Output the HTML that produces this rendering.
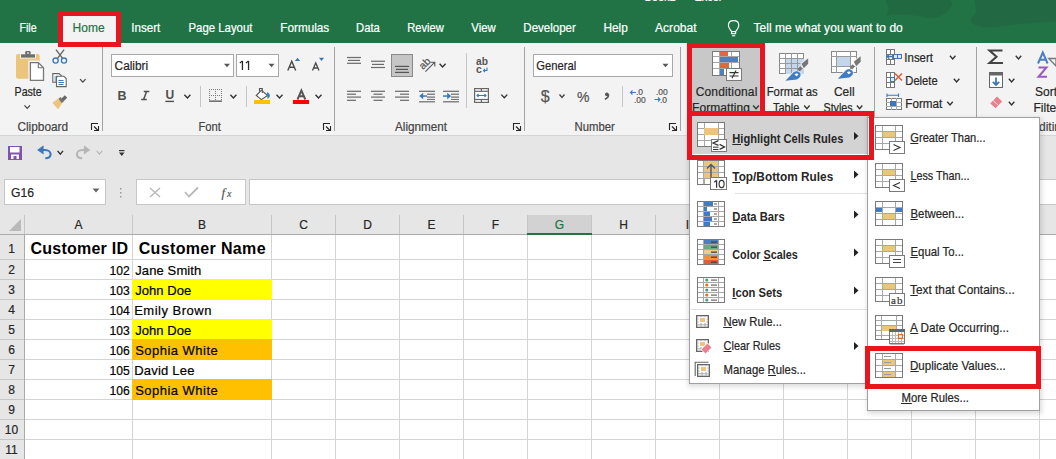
<!DOCTYPE html>
<html><head><meta charset="utf-8"><style>
html,body{margin:0;padding:0;width:1056px;height:459px;overflow:hidden;background:#fff}
svg{display:block;font-family:"Liberation Sans",sans-serif}
</style></head><body>
<svg width="1056" height="459" viewBox="0 0 1056 459">
<rect x="0" y="0" width="1056" height="43" fill="#217346" />
<path d="M885,0 L889,9 L885.5,16 C900,13 915,15 927,18 C940,18 948,14 952,5 L951,0 Z" fill="#216a41" />
<path d="M975,0 L976,10 C977,14 972,17 970.5,19.5 C972,24 978,27.5 988,27.5 C1000,27 1010,25 1020,24 C1035,22.5 1045,22 1056,22 L1056,0 Z" fill="#226842" />
<text x="0" y="0" transform="translate(644.60,1) scale(0.9083,1)" font-size="12" font-weight="400" fill="#ffffff" stroke="#ffffff" stroke-width="0.2" >Book1</text>
<text x="0" y="0" transform="translate(694.60,1) scale(0.9066,1)" font-size="12" font-weight="400" fill="#ffffff" stroke="#ffffff" stroke-width="0.2" >Excel</text>
<text x="0" y="0" transform="translate(19.40,32) scale(0.8951,1)" font-size="12" font-weight="400" fill="#ffffff" stroke="#ffffff" stroke-width="0.2" >File</text>
<text x="0" y="0" transform="translate(131.23,32) scale(0.9671,1)" font-size="12" font-weight="400" fill="#ffffff" stroke="#ffffff" stroke-width="0.2" >Insert</text>
<text x="0" y="0" transform="translate(188.50,32) scale(0.9492,1)" font-size="12" font-weight="400" fill="#ffffff" stroke="#ffffff" stroke-width="0.2" >Page Layout</text>
<text x="0" y="0" transform="translate(280.30,32) scale(0.9798,1)" font-size="12" font-weight="400" fill="#ffffff" stroke="#ffffff" stroke-width="0.2" >Formulas</text>
<text x="0" y="0" transform="translate(356.00,32) scale(0.9387,1)" font-size="12" font-weight="400" fill="#ffffff" stroke="#ffffff" stroke-width="0.2" >Data</text>
<text x="0" y="0" transform="translate(407.20,32) scale(0.9325,1)" font-size="12" font-weight="400" fill="#ffffff" stroke="#ffffff" stroke-width="0.2" >Review</text>
<text x="0" y="0" transform="translate(471.30,32) scale(0.9454,1)" font-size="12" font-weight="400" fill="#ffffff" stroke="#ffffff" stroke-width="0.2" >View</text>
<text x="0" y="0" transform="translate(523.30,32) scale(0.9616,1)" font-size="12" font-weight="400" fill="#ffffff" stroke="#ffffff" stroke-width="0.2" >Developer</text>
<text x="0" y="0" transform="translate(603.40,32) scale(0.9878,1)" font-size="12" font-weight="400" fill="#ffffff" stroke="#ffffff" stroke-width="0.2" >Help</text>
<text x="655.10" y="32" font-size="12" font-weight="400" fill="#ffffff" stroke="#ffffff" stroke-width="0.2" letter-spacing="0.013" >Acrobat</text>
<text x="753.50" y="32" font-size="12" font-weight="400" fill="#ffffff" stroke="#ffffff" stroke-width="0.2" letter-spacing="0.046" >Tell me what you want to do</text>
<path d="M731.3,31.2 C729.2,28.2 728.4,27 728.4,25.4 C728.4,22.4 730.7,20.6 733.6,20.6 C736.5,20.6 738.8,22.4 738.8,25.4 C738.8,27 738,28.2 735.9,31.2" fill="none" stroke="#ffffff" stroke-width="1.15" />
<rect x="731.55" y="31.55" width="4.1" height="2.1" fill="none" stroke="#ffffff" stroke-width="1.1" />
<rect x="732" y="35.2" width="3.2000000000000455" height="1.1" fill="#ffffff"/>
<rect x="58" y="11" width="63" height="36" fill="#f3f3f3" />
<text x="72.60" y="32" font-size="12" font-weight="400" fill="#217346" stroke="#217346" stroke-width="0.2" letter-spacing="0.021" >Home</text>
<rect x="0" y="43" width="1056" height="92" fill="#f3f3f3" />
<rect x="0" y="135" width="1056" height="1" fill="#d5d5d5"/>
<rect x="102" y="47" width="1" height="84" fill="#a2a2a2"/>
<rect x="334" y="47" width="1" height="84" fill="#a2a2a2"/>
<rect x="524" y="47" width="1" height="84" fill="#a2a2a2"/>
<rect x="680" y="47" width="1" height="84" fill="#a2a2a2"/>
<rect x="874" y="47" width="1" height="84" fill="#a2a2a2"/>
<rect x="976" y="47" width="1" height="84" fill="#a2a2a2"/>
<text x="0" y="0" transform="translate(17.40,131) scale(0.9884,1)" font-size="12" font-weight="400" fill="#444444" stroke="#444444" stroke-width="0.2" >Clipboard</text>
<text x="0" y="0" transform="translate(198.40,131) scale(0.9361,1)" font-size="12" font-weight="400" fill="#444444" stroke="#444444" stroke-width="0.2" >Font</text>
<text x="0" y="0" transform="translate(395.00,131) scale(0.9736,1)" font-size="12" font-weight="400" fill="#444444" stroke="#444444" stroke-width="0.2" >Alignment</text>
<text x="0" y="0" transform="translate(574.50,131) scale(0.9442,1)" font-size="12" font-weight="400" fill="#444444" stroke="#444444" stroke-width="0.2" >Number</text>
<text x="1031.00" y="131" font-size="12" font-weight="400" fill="#444444" stroke="#444444" stroke-width="0.2" >Editing</text>
<path d="M91.5,130 L91.5,123.5 L98,123.5" fill="none" stroke="#262626" stroke-width="1.1" />
<path d="M94,126.5 L98,130.5 M98.5,126 L98.5,130.5 L94,130.5" fill="none" stroke="#262626" stroke-width="1.1" />
<path d="M323.5,130 L323.5,123.5 L330,123.5" fill="none" stroke="#262626" stroke-width="1.1" />
<path d="M326,126.5 L330,130.5 M330.5,126 L330.5,130.5 L326,130.5" fill="none" stroke="#262626" stroke-width="1.1" />
<path d="M513.5,130 L513.5,123.5 L520,123.5" fill="none" stroke="#262626" stroke-width="1.1" />
<path d="M516,126.5 L520,130.5 M520.5,126 L520.5,130.5 L516,130.5" fill="none" stroke="#262626" stroke-width="1.1" />
<path d="M669.5,130 L669.5,123.5 L676,123.5" fill="none" stroke="#262626" stroke-width="1.1" />
<path d="M672,126.5 L676,130.5 M676.5,126 L676.5,130.5 L672,130.5" fill="none" stroke="#262626" stroke-width="1.1" />
<rect x="16" y="54" width="23.7" height="24.7" rx="2" fill="#ebc57c"/>
<rect x="20" y="54" width="16" height="4.5" fill="#f3f3f3" />
<path d="M21,54.3 L35,54.3 L35,57.6 L21,57.6 Z" fill="#6d6d6d" />
<rect x="25.2" y="51" width="5.4" height="4" rx="1.2" fill="#6d6d6d"/>
<rect x="27.2" y="52.3" width="1.6" height="1.5" fill="#f3f3f3" />
<path d="M28.3,60.5 L39,60.5 L45.3,66.8 L45.3,82 L28.3,82 Z" fill="#f3f3f3" />
<path d="M30.4,62.6 L38.3,62.6 L43.5,67.8 L43.5,80.3 L30.4,80.3 Z" fill="#ffffff" stroke="#777" stroke-width="1.3" />
<path d="M38.3,62.6 L38.3,67.8 L43.5,67.8" fill="none" stroke="#777" stroke-width="1.1" />
<text x="0" y="0" transform="translate(14.60,96) scale(0.8835,1)" font-size="12" font-weight="400" fill="#262626" stroke="#262626" stroke-width="0.2" >Paste</text>
<path d="M24.45,105.3 L27.2,108.3 L29.95,105.3" fill="none" stroke="#444" stroke-width="1.2" />
<path d="M56,49.6 L62.4,58.2 M64.1,49.6 L57.7,58.2" fill="none" stroke="#666" stroke-width="1.4" />
<circle cx="55.6" cy="60.6" r="2.6" fill="none" stroke="#3c78b8" stroke-width="1.3"/>
<circle cx="64" cy="60.6" r="2.6" fill="none" stroke="#3c78b8" stroke-width="1.3"/>
<path d="M52.8,73.6 L59.2,73.6 L61.2,75.6 L61.2,82.3 L52.8,82.3 Z" fill="#fff" stroke="#666" stroke-width="1.1" />
<path d="M56.5,76.2 L63.8,76.2 L66.2,78.6 L66.2,86.6 L56.5,86.6 Z" fill="#fff" stroke="#666" stroke-width="1.1" />
<rect x="54.5" y="76.5" width="3.0" height="1" fill="#3c78b8"/>
<rect x="54.5" y="78.5" width="2.0" height="1" fill="#3c78b8"/>
<rect x="54.5" y="80.5" width="1.5" height="1" fill="#3c78b8"/>
<rect x="58.5" y="80" width="5.0" height="1" fill="#3c78b8"/>
<rect x="58.5" y="82" width="5.5" height="1" fill="#3c78b8"/>
<rect x="58.5" y="84" width="5.0" height="1" fill="#3c78b8"/>
<path d="M80.05,79.1 L82.8,82.1 L85.55,79.1" fill="none" stroke="#444" stroke-width="1.2" />
<path d="M61,101.5 L66,96.5" fill="none" stroke="#666" stroke-width="3.4" />
<path d="M57.5,99.5 L60.5,97 L64,100.8 L61.3,103.3 Z" fill="#777" />
<path d="M52.3,102.8 L58.3,98.6 L62,103.5 L58,109.2 Z" fill="#ebc57c" />
<rect x="111.5" y="54.5" width="122" height="22" fill="#ffffff" stroke="#a8a8a8" stroke-width="1" />
<text x="0" y="0" transform="translate(114.60,70) scale(0.9867,1)" font-size="12" font-weight="400" fill="#262626" stroke="#262626" stroke-width="0.2" >Calibri</text>
<path d="M224.0,63.75 L230.0,63.75 L227,67.25 Z" fill="#555" />
<rect x="236.5" y="54.5" width="42" height="22" fill="#ffffff" stroke="#a8a8a8" stroke-width="1" />
<rect x="241.8" y="61" width="1.3" height="9" fill="#262626"/>
<path d="M239.8,63 L242.4,61" fill="none" stroke="#262626" stroke-width="1.1" />
<rect x="247.9" y="61" width="1.3" height="9" fill="#262626"/>
<path d="M245.9,63 L248.5,61" fill="none" stroke="#262626" stroke-width="1.1" />
<path d="M268.5,63.75 L274.5,63.75 L271.5,67.25 Z" fill="#555" />
<path d="M287.8,70.6 L291.75,61.2 L295.7,70.6 M289.2,67.3 L294.3,67.3" fill="none" stroke="#4a4a4a" stroke-width="1.4" />
<path d="M294.9,61 L297.5,57.8 L300.1,61 Z" fill="#3c78b8" />
<path d="M312.5,70.6 L315.75,63 L319,70.6 M313.7,68 L317.8,68" fill="none" stroke="#4a4a4a" stroke-width="1.3" />
<path d="M318.9,57.8 L324.1,57.8 L321.5,61 Z" fill="#3c78b8" />
<text x="117.60" y="100" font-size="12.5" font-weight="700" fill="#4f4f4f" stroke="#4f4f4f" stroke-width="0" >B</text>
<path d="M146.6,91.5 L143.6,99.5 M143.8,91.6 L149.3,91.6 M141.2,99.4 L146.8,99.4" fill="none" stroke="#4f4f4f" stroke-width="1.5" />
<text x="165.40" y="99" font-size="12" font-weight="700" fill="#4f4f4f" stroke="#4f4f4f" stroke-width="0" >U</text>
<rect x="165.4" y="100.7" width="8.599999999999994" height="1.4" fill="#4f4f4f"/>
<path d="M184.4,94.7 L187.4,97.89999999999999 L190.4,94.7" fill="none" stroke="#333" stroke-width="1.35" />
<rect x="200" y="86" width="1" height="21" fill="#c6c6c6"/>
<rect x="209" y="89" width="1" height="1" fill="#777" />
<rect x="209" y="95" width="1" height="1" fill="#777" />
<rect x="209" y="89" width="1" height="1" fill="#777" />
<rect x="215" y="89" width="1" height="1" fill="#777" />
<rect x="221" y="89" width="1" height="1" fill="#777" />
<rect x="211" y="89" width="1" height="1" fill="#777" />
<rect x="211" y="95" width="1" height="1" fill="#777" />
<rect x="209" y="91" width="1" height="1" fill="#777" />
<rect x="215" y="91" width="1" height="1" fill="#777" />
<rect x="221" y="91" width="1" height="1" fill="#777" />
<rect x="213" y="89" width="1" height="1" fill="#777" />
<rect x="213" y="95" width="1" height="1" fill="#777" />
<rect x="209" y="93" width="1" height="1" fill="#777" />
<rect x="215" y="93" width="1" height="1" fill="#777" />
<rect x="221" y="93" width="1" height="1" fill="#777" />
<rect x="215" y="89" width="1" height="1" fill="#777" />
<rect x="215" y="95" width="1" height="1" fill="#777" />
<rect x="209" y="95" width="1" height="1" fill="#777" />
<rect x="215" y="95" width="1" height="1" fill="#777" />
<rect x="221" y="95" width="1" height="1" fill="#777" />
<rect x="217" y="89" width="1" height="1" fill="#777" />
<rect x="217" y="95" width="1" height="1" fill="#777" />
<rect x="209" y="97" width="1" height="1" fill="#777" />
<rect x="215" y="97" width="1" height="1" fill="#777" />
<rect x="221" y="97" width="1" height="1" fill="#777" />
<rect x="219" y="89" width="1" height="1" fill="#777" />
<rect x="219" y="95" width="1" height="1" fill="#777" />
<rect x="209" y="99" width="1" height="1" fill="#777" />
<rect x="215" y="99" width="1" height="1" fill="#777" />
<rect x="221" y="99" width="1" height="1" fill="#777" />
<rect x="221" y="89" width="1" height="1" fill="#777" />
<rect x="221" y="95" width="1" height="1" fill="#777" />
<rect x="209" y="100.5" width="13" height="1.3" fill="#555"/>
<path d="M230.4,94.7 L233.4,97.89999999999999 L236.4,94.7" fill="none" stroke="#333" stroke-width="1.35" />
<rect x="246" y="86" width="1" height="21" fill="#c6c6c6"/>
<path d="M256.3,95.5 L261.4,90.2 L267.6,95.5 L261.4,99.6 Z" fill="#ffffff" stroke="#555" stroke-width="1.1" />
<path d="M259.5,91.5 L259.5,88.5 L262.3,88.5 L262.3,93" fill="none" stroke="#555" stroke-width="1.1" />
<path d="M267,92 C269.5,93 270.5,95.5 269.5,97 L267.5,99 Z" fill="#3c78b8" />
<rect x="254" y="100" width="16" height="4" fill="#ffc000" />
<path d="M276.5,94.7 L279.5,97.89999999999999 L282.5,94.7" fill="none" stroke="#333" stroke-width="1.35" />
<path d="M297.5,99.5 L301.4,90.5 L305.3,99.5 M299.1,96.3 L303.7,96.3" fill="none" stroke="#555" stroke-width="1.9" />
<rect x="293" y="100" width="16" height="4" fill="#ff0000" />
<path d="M315.5,94.7 L318.5,97.89999999999999 L321.5,94.7" fill="none" stroke="#333" stroke-width="1.35" />
<rect x="347.0" y="56.9" width="14.0" height="1.2" fill="#6a6a6a"/>
<rect x="348.0" y="59.8" width="12.0" height="1.2" fill="#6a6a6a"/>
<rect x="347.0" y="62.699999999999996" width="14.0" height="1.2" fill="#6a6a6a"/>
<rect x="371.0" y="60.65" width="14.0" height="1.2" fill="#6a6a6a"/>
<rect x="372.0" y="63.800000000000004" width="12.0" height="1.2" fill="#6a6a6a"/>
<rect x="371.0" y="66.9" width="14.0" height="1.2" fill="#6a6a6a"/>
<rect x="391.5" y="54.5" width="21" height="22" fill="#c6c6c6" stroke="#8a8a8a" stroke-width="1" />
<rect x="395.0" y="65.80000000000001" width="14.0" height="1.2" fill="#555"/>
<rect x="396.0" y="68.80000000000001" width="12.0" height="1.2" fill="#555"/>
<rect x="395.0" y="71.80000000000001" width="14.0" height="1.2" fill="#555"/>
<text x="418.5" y="67" font-size="10.5" fill="#555" stroke="#555" stroke-width="0.2" transform="rotate(-45 424.5 63)">ab</text>
<path d="M425.4,71.7 L434.6,62.4 M430.5,62.2 L434.8,62.2 L434.8,66.5" fill="none" stroke="#555" stroke-width="1.1" />
<path d="M439.6,63.699999999999996 L442.6,66.89999999999999 L445.6,63.699999999999996" fill="none" stroke="#333" stroke-width="1.35" />
<rect x="466" y="53" width="1" height="55" fill="#c6c6c6"/>
<text x="0" y="0" transform="translate(476.00,65) scale(0.9713,1)" font-size="10.5" font-weight="700" fill="#555" stroke="#555" stroke-width="0" >ab</text>
<text x="476.00" y="72.5" font-size="10.5" font-weight="700" fill="#555" stroke="#555" stroke-width="0" >c</text>
<path d="M487,67.5 L487,70.5 L483.5,70.5 M485,69 L483.5,70.5 L485,72" fill="none" stroke="#3b7ac0" stroke-width="1.1" />
<rect x="347" y="90.7" width="14" height="1.2" fill="#6a6a6a"/>
<rect x="347" y="93.60000000000001" width="9" height="1.2" fill="#6a6a6a"/>
<rect x="347" y="96.5" width="14" height="1.2" fill="#6a6a6a"/>
<rect x="347" y="99.7" width="9" height="1.2" fill="#6a6a6a"/>
<rect x="371.0" y="90.7" width="14.0" height="1.2" fill="#6a6a6a"/>
<rect x="373.5" y="93.60000000000001" width="9.0" height="1.2" fill="#6a6a6a"/>
<rect x="371.0" y="96.5" width="14.0" height="1.2" fill="#6a6a6a"/>
<rect x="373.5" y="99.7" width="9.0" height="1.2" fill="#6a6a6a"/>
<rect x="395" y="90.7" width="14" height="1.2" fill="#6a6a6a"/>
<rect x="400" y="93.60000000000001" width="9" height="1.2" fill="#6a6a6a"/>
<rect x="395" y="96.5" width="14" height="1.2" fill="#6a6a6a"/>
<rect x="400" y="99.7" width="9" height="1.2" fill="#6a6a6a"/>
<rect x="419" y="90.7" width="16" height="1.2" fill="#6a6a6a"/>
<rect x="419" y="101.2" width="16" height="1.2" fill="#6a6a6a"/>
<rect x="427" y="93.60000000000001" width="8" height="1.2" fill="#6a6a6a"/>
<rect x="427" y="96.5" width="8" height="1.2" fill="#6a6a6a"/>
<rect x="427" y="98.9" width="8" height="1.0" fill="#6a6a6a"/>
<rect x="443" y="90.7" width="16" height="1.2" fill="#6a6a6a"/>
<rect x="443" y="101.2" width="16" height="1.2" fill="#6a6a6a"/>
<rect x="451" y="93.60000000000001" width="8" height="1.2" fill="#6a6a6a"/>
<rect x="451" y="96.5" width="8" height="1.2" fill="#6a6a6a"/>
<rect x="451" y="98.9" width="8" height="1.0" fill="#6a6a6a"/>
<path d="M419.2,96 L423.2,92.8 L423.2,99.2 Z" fill="#3c78b8" />
<rect x="422.5" y="95.3" width="4.5" height="1.5" fill="#3c78b8"/>
<path d="M451.2,96 L447.2,92.8 L447.2,99.2 Z" fill="#3c78b8" />
<rect x="443" y="95.3" width="5" height="1.5" fill="#3c78b8"/>
<rect x="474.6" y="88.6" width="13.8" height="13.8" fill="#ffffff" stroke="#666" stroke-width="1.2" />
<rect x="474" y="90.7" width="15" height="1.2" fill="#666"/>
<rect x="474" y="98.9" width="15" height="1.2" fill="#666"/>
<rect x="480.8" y="88" width="1.2" height="3" fill="#666"/>
<rect x="480.8" y="99" width="1.2" height="4" fill="#666"/>
<path d="M477,95.5 L486,95.5 M478.5,94 L477,95.5 L478.5,97 M484.5,94 L486,95.5 L484.5,97" fill="none" stroke="#3c78b8" stroke-width="1.1" />
<path d="M501.3,94.60000000000001 L504.3,97.8 L507.3,94.60000000000001" fill="none" stroke="#333" stroke-width="1.35" />
<rect x="533.5" y="54.5" width="139" height="22" fill="#ffffff" stroke="#a8a8a8" stroke-width="1" />
<text x="0" y="0" transform="translate(536.30,70) scale(0.9351,1)" font-size="12" font-weight="400" fill="#262626" stroke="#262626" stroke-width="0.2" >General</text>
<path d="M662.5,63.75 L668.5,63.75 L665.5,67.25 Z" fill="#555" />
<text x="540.70" y="101.5" font-size="16" font-weight="400" fill="#555" stroke="#555" stroke-width="0.2" >$</text>
<path d="M559.5,94.5 L562,97.5 L564.5,94.5" fill="none" stroke="#444" stroke-width="1.35" />
<text x="577.00" y="102" font-size="14" font-weight="400" fill="#555" stroke="#555" stroke-width="0.2" >%</text>
<circle cx="606.9" cy="94.3" r="1.9" fill="#555"/>
<path d="M608.5,94.5 C608.5,97 607,98.5 604.8,99.2" fill="none" stroke="#555" stroke-width="1.6" />
<rect x="622" y="86" width="1" height="21" fill="#c8c8c8"/>
<text x="636.00" y="95" font-size="8.5" font-weight="400" fill="#555" stroke="#555" stroke-width="0.2" >.0</text>
<text x="634.00" y="102.5" font-size="8.5" font-weight="400" fill="#555" stroke="#555" stroke-width="0.2" >.00</text>
<path d="M630.5,92.5 L636,92.5 M632.5,90.5 L630.5,92.5 L632.5,94.5" fill="none" stroke="#3b7ac0" stroke-width="1.1" />
<text x="656.00" y="95" font-size="8.5" font-weight="400" fill="#555" stroke="#555" stroke-width="0.2" >.00</text>
<text x="660.00" y="102.5" font-size="8.5" font-weight="400" fill="#555" stroke="#555" stroke-width="0.2" >.0</text>
<path d="M654.5,99.5 L660,99.5 M658,97.5 L660,99.5 L658,101.5" fill="none" stroke="#3b7ac0" stroke-width="1.1" />
<rect x="688" y="43" width="77" height="68" fill="#c8c8c8" />
<rect x="712.5" y="51.5" width="27" height="24" fill="#fff" stroke="#7a7a7a" stroke-width="1" />
<rect x="719" y="52" width="1" height="23" fill="#a8a8a8"/>
<rect x="731" y="52" width="1" height="23" fill="#a8a8a8"/>
<rect x="713" y="56" width="26" height="1" fill="#a8a8a8"/>
<rect x="713" y="62" width="26" height="1" fill="#a8a8a8"/>
<rect x="713" y="68" width="26" height="1" fill="#a8a8a8"/>
<rect x="720" y="52" width="8" height="4" fill="#dd6a3c" />
<rect x="720" y="57" width="18" height="5" fill="#4a80c4" />
<rect x="720" y="63" width="9" height="5" fill="#dd6a3c" />
<rect x="720" y="69" width="4" height="6" fill="#4a80c4" />
<rect x="726.5" y="68.5" width="15" height="12" fill="#fff" stroke="#7a7a7a" stroke-width="1" />
<path d="M729.5,72.6 L738.5,72.6 M729.5,76 L738.5,76 M736,70.5 L732,78.3" fill="none" stroke="#333" stroke-width="1.1" />
<text x="695.70" y="96" font-size="12" font-weight="400" fill="#262626" stroke="#262626" stroke-width="0.2" letter-spacing="0.163" >Conditional</text>
<text x="692.10" y="112" font-size="12" font-weight="400" fill="#262626" stroke="#262626" stroke-width="0.2" letter-spacing="0.047" >Formatting</text>
<path d="M753.1,105.5 L756,108.69999999999999 L758.9,105.5" fill="none" stroke="#333" stroke-width="1.35" />
<rect x="779.5" y="53.5" width="24" height="20" fill="#fff" stroke="#888" stroke-width="1" />
<rect x="785" y="59" width="19" height="15" fill="#c3d6ec" />
<rect x="785" y="53" width="1" height="21" fill="#999"/>
<rect x="791" y="53" width="1" height="21" fill="#999"/>
<rect x="797" y="53" width="1" height="21" fill="#999"/>
<rect x="779" y="58" width="25" height="1" fill="#999"/>
<rect x="779" y="63" width="25" height="1" fill="#999"/>
<rect x="779" y="68" width="25" height="1" fill="#999"/>
<g transform="translate(0,0)"><path d="M801.5,63.8 L808.2,58.3 L808.2,63.8 L803.8,68.2 Z" fill="#f3f3f3" stroke="#f3f3f3" stroke-width="2"/><path d="M801.5,63.8 L808.2,58.3 L808.2,63.8 L803.8,68.2 Z" fill="#777"/><path d="M797.3,69.2 L800.3,66.2 L802.6,68.5 L799.6,71.5 Z" fill="#777"/><path d="M799.6,72.6 C801.8,74.8 800.2,78.2 796.8,79.4 L785.4,80.8 L793.6,72.2 C795.6,70.6 798.2,71.2 799.6,72.6 Z" fill="#f3f3f3" stroke="#f3f3f3" stroke-width="1.6"/><path d="M799.6,72.6 C801.8,74.8 800.2,78.2 796.8,79.4 L785.4,80.8 L793.6,72.2 C795.6,70.6 798.2,71.2 799.6,72.6 Z" fill="#3f7cc4"/><path d="M794.5,74.3 C796,73 798,73.3 798.5,74.8 L796.3,76.3 Z" fill="#ffffff"/></g>
<text x="0" y="0" transform="translate(766.70,96) scale(0.9442,1)" font-size="12" font-weight="400" fill="#262626" stroke="#262626" stroke-width="0.2" >Format as</text>
<text x="0" y="0" transform="translate(773.00,112) scale(0.9168,1)" font-size="12" font-weight="400" fill="#262626" stroke="#262626" stroke-width="0.2" >Table</text>
<path d="M804.1999999999999,105.5 L806.9,108.69999999999999 L809.6,105.5" fill="none" stroke="#333" stroke-width="1.35" />
<rect x="831.5" y="51.5" width="25" height="21" fill="#fff" stroke="#888" stroke-width="1" />
<rect x="837" y="56" width="13" height="10" fill="#c3d6ec" />
<rect x="836" y="51" width="1" height="22" fill="#999"/>
<rect x="850" y="51" width="1" height="22" fill="#999"/>
<rect x="831" y="56" width="26" height="1" fill="#999"/>
<rect x="831" y="66" width="26" height="1" fill="#999"/>
<g transform="translate(52.4,-2)"><path d="M801.5,63.8 L808.2,58.3 L808.2,63.8 L803.8,68.2 Z" fill="#f3f3f3" stroke="#f3f3f3" stroke-width="2"/><path d="M801.5,63.8 L808.2,58.3 L808.2,63.8 L803.8,68.2 Z" fill="#777"/><path d="M797.3,69.2 L800.3,66.2 L802.6,68.5 L799.6,71.5 Z" fill="#777"/><path d="M799.6,72.6 C801.8,74.8 800.2,78.2 796.8,79.4 L785.4,80.8 L793.6,72.2 C795.6,70.6 798.2,71.2 799.6,72.6 Z" fill="#f3f3f3" stroke="#f3f3f3" stroke-width="1.6"/><path d="M799.6,72.6 C801.8,74.8 800.2,78.2 796.8,79.4 L785.4,80.8 L793.6,72.2 C795.6,70.6 798.2,71.2 799.6,72.6 Z" fill="#3f7cc4"/><path d="M794.5,74.3 C796,73 798,73.3 798.5,74.8 L796.3,76.3 Z" fill="#ffffff"/></g>
<text x="0" y="0" transform="translate(834.00,96) scale(0.9947,1)" font-size="12" font-weight="400" fill="#262626" stroke="#262626" stroke-width="0.2" >Cell</text>
<text x="0" y="0" transform="translate(823.50,112) scale(0.8936,1)" font-size="12" font-weight="400" fill="#262626" stroke="#262626" stroke-width="0.2" >Styles</text>
<path d="M856.9,105.5 L859.6,108.69999999999999 L862.3000000000001,105.5" fill="none" stroke="#333" stroke-width="1.35" />
<rect x="886.5" y="49.5" width="8" height="5" fill="#ffffff" stroke="#777" stroke-width="1" />
<rect x="886.5" y="54.5" width="6" height="5" fill="#ffffff" stroke="#777" stroke-width="1" />
<rect x="886.5" y="59.5" width="8" height="5" fill="#ffffff" stroke="#777" stroke-width="1" />
<rect x="893.5" y="54.5" width="4" height="4" fill="#dce8f5" stroke="#3c78b8" stroke-width="1" />
<rect x="897.5" y="54.5" width="4" height="4" fill="#dce8f5" stroke="#3c78b8" stroke-width="1" />
<rect x="890" y="49" width="1" height="5" fill="#777"/>
<rect x="890" y="60" width="1" height="5" fill="#777"/>
<path d="M892.5,56.5 L887,56.5 M889.3,54.2 L887,56.5 L889.3,58.8" fill="none" stroke="#3c78b8" stroke-width="1.3" />
<text x="0" y="0" transform="translate(904.35,62) scale(0.9536,1)" font-size="12" font-weight="400" fill="#262626" stroke="#262626" stroke-width="0.2" >Insert</text>
<path d="M949.95,55.8 L952.7,59.0 L955.45,55.8" fill="none" stroke="#333" stroke-width="1.35" />
<rect x="886.5" y="72.5" width="8" height="5" fill="#ffffff" stroke="#777" stroke-width="1" />
<rect x="886.5" y="77.5" width="4" height="5" fill="#ffffff" stroke="#777" stroke-width="1" />
<rect x="886.5" y="82.5" width="8" height="5" fill="#ffffff" stroke="#777" stroke-width="1" />
<rect x="890.5" y="77.5" width="4" height="4" fill="#dce8f5" stroke="#3c78b8" stroke-width="1" />
<rect x="890" y="72" width="1" height="5" fill="#777"/>
<rect x="890" y="83" width="1" height="5" fill="#777"/>
<path d="M895,73.5 L902,80.5 M902,73.5 L895,80.5" fill="none" stroke="#e0603a" stroke-width="1.6" />
<text x="0" y="0" transform="translate(905.30,85) scale(0.9339,1)" font-size="12" font-weight="400" fill="#262626" stroke="#262626" stroke-width="0.2" >Delete</text>
<path d="M953.85,78.7 L956.6,81.89999999999999 L959.35,78.7" fill="none" stroke="#333" stroke-width="1.35" />
<path d="M887,95.3 L898.5,95.3 M887,93.5 L887,97 M898.5,93.5 L898.5,97" fill="none" stroke="#3c78b8" stroke-width="1.1" />
<rect x="886.5" y="98.5" width="15" height="11" fill="#ffffff" stroke="#777" stroke-width="1" />
<rect x="891" y="98" width="1" height="12" fill="#aaa"/>
<rect x="896" y="98" width="1" height="12" fill="#aaa"/>
<rect x="886" y="102" width="16" height="1" fill="#aaa"/>
<rect x="886" y="106" width="16" height="1" fill="#aaa"/>
<rect x="890" y="101" width="6" height="5" fill="#3c78b8" />
<text x="0" y="0" transform="translate(905.30,108) scale(0.9749,1)" font-size="12" font-weight="400" fill="#262626" stroke="#262626" stroke-width="0.2" >Format</text>
<path d="M947.25,101.7 L950,104.89999999999999 L952.75,101.7" fill="none" stroke="#333" stroke-width="1.35" />
<path d="M1002.5,50.5 L989.5,50.5 L996.5,56.8 L989.5,63 L1003,63" fill="none" stroke="#444" stroke-width="2.1" />
<path d="M1015.75,55.8 L1018.5,59.0 L1021.25,55.8" fill="none" stroke="#333" stroke-width="1.35" />
<rect x="989.5" y="72.5" width="13" height="15" fill="#ffffff" stroke="#666" stroke-width="1" />
<rect x="989" y="72" width="14" height="3.5" fill="#666" />
<path d="M996,77.5 L996,85 M992.8,81.8 L996,85 L999.2,81.8" fill="none" stroke="#3c78b8" stroke-width="1.8" />
<path d="M1008.85,78.7 L1011.6,81.89999999999999 L1014.35,78.7" fill="none" stroke="#333" stroke-width="1.35" />
<path d="M997,96.6 L1002.2,101.4 L995.5,108.2 L990.2,103.4 Z" fill="#e8808f" />
<path d="M993,100.5 L998.5,105.5" fill="none" stroke="#f3f3f3" stroke-width="0.8" />
<path d="M1008.85,101.7 L1011.6,104.89999999999999 L1014.35,101.7" fill="none" stroke="#333" stroke-width="1.35" />
<path d="M1038,63.5 L1042.8,52.6 L1047.6,63.5 M1039.8,59.8 L1045.8,59.8" fill="none" stroke="#4a7fc1" stroke-width="2" />
<path d="M1038.5,67.5 L1046.5,67.5 L1038.5,76.8 L1047,76.8" fill="none" stroke="#9a5bbf" stroke-width="2" />
<path d="M1048.7,58.5 L1056,58.5 L1056,66 Z" fill="none" stroke="#777" stroke-width="1.3" />
<text x="1035.00" y="96" font-size="12" font-weight="400" fill="#262626" stroke="#262626" stroke-width="0.2" >Sort</text>
<text x="1033.50" y="111.5" font-size="12" font-weight="400" fill="#262626" stroke="#262626" stroke-width="0.2" >Filte</text>
<rect x="0" y="136" width="1056" height="99" fill="#e6e6e6" />
<rect x="8" y="146" width="14" height="14" fill="#8053b0" />
<rect x="10" y="147" width="9.5" height="5.5" fill="#ffffff" />
<rect x="11" y="154.5" width="8" height="4.5" fill="#ffffff" />
<rect x="13.5" y="156" width="3" height="3" fill="#8053b0" />
<path d="M43,146.6 L38.2,150 L43,153.4 Z" fill="#3c78b8" stroke="#3c78b8" stroke-width="1.2" />
<path d="M40,150 L45,150 C49,150 50.6,152.3 50.6,154.3 C50.6,156.6 48.5,158.3 45.3,158.3" fill="none" stroke="#3c78b8" stroke-width="2.1" />
<path d="M57.55,150.9 L60.3,154.1 L63.05,150.9" fill="none" stroke="#333" stroke-width="1.4" />
<path d="M84.5,146.6 L89.3,150 L84.5,153.4 Z" fill="#b5b5b5" stroke="#b5b5b5" stroke-width="1.2" />
<path d="M87.5,150 L82.5,150 C78.5,150 76.9,152.3 76.9,154.3 C76.9,156.6 79,158.3 82.2,158.3" fill="none" stroke="#b5b5b5" stroke-width="2.1" />
<path d="M96.75,150.9 L99.5,154.1 L102.25,150.9" fill="none" stroke="#b5b5b5" stroke-width="1.1" />
<rect x="119" y="150" width="5.5" height="1.2" fill="#333"/>
<path d="M119,152.5 L124.5,152.5 L121.75,156 Z" fill="#333" />
<rect x="4.5" y="179.5" width="101" height="25" fill="#ffffff" stroke="#c6c6c6" stroke-width="1" />
<text x="0" y="0" transform="translate(11.00,197) scale(0.9715,1)" font-size="12.5" font-weight="400" fill="#262626" stroke="#262626" stroke-width="0.2" >G16</text>
<path d="M92.5,188.5 L99.5,188.5 L96,192.5 Z" fill="#666" />
<rect x="120" y="188" width="1.5" height="1.5" fill="#999" />
<rect x="120" y="192" width="1.5" height="1.5" fill="#999" />
<rect x="120" y="196" width="1.5" height="1.5" fill="#999" />
<rect x="136.5" y="179.5" width="109" height="25" fill="#ffffff" stroke="#c6c6c6" stroke-width="1" />
<path d="M150,188 L160,197 M160,188 L150,197" fill="none" stroke="#b8b8b8" stroke-width="1.4" />
<path d="M185,192 L189,196.5 L198,187.5" fill="none" stroke="#b8b8b8" stroke-width="1.8" />
<text x="221.50" y="197" font-size="13" font-weight="400" fill="#555" stroke="#555" stroke-width="0.2" font-family="Liberation Serif" font-style="italic">f</text>
<text x="227.00" y="197" font-size="10" font-weight="400" fill="#555" stroke="#555" stroke-width="0.2" font-family="Liberation Serif" font-style="italic">x</text>
<rect x="249.5" y="179.5" width="819" height="25" fill="#ffffff" stroke="#c6c6c6" stroke-width="1" />
<rect x="528" y="215" width="63" height="19" fill="#d2d2d2" />
<rect x="24" y="215" width="1" height="19" fill="#c6c6c6"/>
<rect x="132" y="215" width="1" height="19" fill="#c6c6c6"/>
<rect x="271" y="215" width="1" height="19" fill="#c6c6c6"/>
<rect x="335" y="215" width="1" height="19" fill="#c6c6c6"/>
<rect x="399" y="215" width="1" height="19" fill="#c6c6c6"/>
<rect x="463" y="215" width="1" height="19" fill="#c6c6c6"/>
<rect x="527" y="215" width="1" height="19" fill="#c6c6c6"/>
<rect x="591" y="215" width="1" height="19" fill="#c6c6c6"/>
<rect x="655" y="215" width="1" height="19" fill="#c6c6c6"/>
<rect x="719" y="215" width="1" height="19" fill="#c6c6c6"/>
<rect x="783" y="215" width="1" height="19" fill="#c6c6c6"/>
<rect x="847" y="215" width="1" height="19" fill="#c6c6c6"/>
<rect x="911" y="215" width="1" height="19" fill="#c6c6c6"/>
<rect x="975" y="215" width="1" height="19" fill="#c6c6c6"/>
<rect x="1039" y="215" width="1" height="19" fill="#c6c6c6"/>
<rect x="0" y="234" width="1056" height="1" fill="#ababab"/>
<text x="78.50" y="229" font-size="12" font-weight="400" fill="#262626" stroke="#262626" stroke-width="0.2" text-anchor="middle" >A</text>
<text x="202.00" y="229" font-size="12" font-weight="400" fill="#262626" stroke="#262626" stroke-width="0.2" text-anchor="middle" >B</text>
<text x="303.50" y="229" font-size="12" font-weight="400" fill="#262626" stroke="#262626" stroke-width="0.2" text-anchor="middle" >C</text>
<text x="367.50" y="229" font-size="12" font-weight="400" fill="#262626" stroke="#262626" stroke-width="0.2" text-anchor="middle" >D</text>
<text x="431.50" y="229" font-size="12" font-weight="400" fill="#262626" stroke="#262626" stroke-width="0.2" text-anchor="middle" >E</text>
<text x="495.50" y="229" font-size="12" font-weight="400" fill="#262626" stroke="#262626" stroke-width="0.2" text-anchor="middle" >F</text>
<text x="559.50" y="229" font-size="12" font-weight="400" fill="#217346" stroke="#217346" stroke-width="0.2" text-anchor="middle" >G</text>
<text x="623.50" y="229" font-size="12" font-weight="400" fill="#262626" stroke="#262626" stroke-width="0.2" text-anchor="middle" >H</text>
<text x="687.50" y="229" font-size="12" font-weight="400" fill="#262626" stroke="#262626" stroke-width="0.2" text-anchor="middle" >I</text>
<text x="751.50" y="229" font-size="12" font-weight="400" fill="#262626" stroke="#262626" stroke-width="0.2" text-anchor="middle" >J</text>
<text x="815.50" y="229" font-size="12" font-weight="400" fill="#262626" stroke="#262626" stroke-width="0.2" text-anchor="middle" >K</text>
<text x="879.50" y="229" font-size="12" font-weight="400" fill="#262626" stroke="#262626" stroke-width="0.2" text-anchor="middle" >L</text>
<text x="943.50" y="229" font-size="12" font-weight="400" fill="#262626" stroke="#262626" stroke-width="0.2" text-anchor="middle" >M</text>
<text x="1007.50" y="229" font-size="12" font-weight="400" fill="#262626" stroke="#262626" stroke-width="0.2" text-anchor="middle" >N</text>
<path d="M21,219 L21,231 L9,231 Z" fill="#b9b9b9" />
<rect x="527" y="233" width="65" height="2" fill="#217346"/>
<rect x="25" y="235" width="1031" height="224" fill="#ffffff" />
<rect x="0" y="235" width="24" height="224" fill="#e6e6e6" />
<rect x="24" y="235" width="1" height="224" fill="#ababab"/>
<rect x="0" y="259" width="24" height="1" fill="#c6c6c6"/>
<rect x="25" y="259" width="1031" height="1" fill="#d4d4d4"/>
<rect x="0" y="279" width="24" height="1" fill="#c6c6c6"/>
<rect x="25" y="279" width="1031" height="1" fill="#d4d4d4"/>
<rect x="0" y="299" width="24" height="1" fill="#c6c6c6"/>
<rect x="25" y="299" width="1031" height="1" fill="#d4d4d4"/>
<rect x="0" y="319" width="24" height="1" fill="#c6c6c6"/>
<rect x="25" y="319" width="1031" height="1" fill="#d4d4d4"/>
<rect x="0" y="339" width="24" height="1" fill="#c6c6c6"/>
<rect x="25" y="339" width="1031" height="1" fill="#d4d4d4"/>
<rect x="0" y="359" width="24" height="1" fill="#c6c6c6"/>
<rect x="25" y="359" width="1031" height="1" fill="#d4d4d4"/>
<rect x="0" y="379" width="24" height="1" fill="#c6c6c6"/>
<rect x="25" y="379" width="1031" height="1" fill="#d4d4d4"/>
<rect x="0" y="399" width="24" height="1" fill="#c6c6c6"/>
<rect x="25" y="399" width="1031" height="1" fill="#d4d4d4"/>
<rect x="0" y="419" width="24" height="1" fill="#c6c6c6"/>
<rect x="25" y="419" width="1031" height="1" fill="#d4d4d4"/>
<rect x="0" y="439" width="24" height="1" fill="#c6c6c6"/>
<rect x="25" y="439" width="1031" height="1" fill="#d4d4d4"/>
<rect x="0" y="459" width="24" height="1" fill="#c6c6c6"/>
<rect x="25" y="459" width="1031" height="1" fill="#d4d4d4"/>
<rect x="132" y="235" width="1" height="224" fill="#d4d4d4"/>
<rect x="271" y="235" width="1" height="224" fill="#d4d4d4"/>
<rect x="335" y="235" width="1" height="224" fill="#d4d4d4"/>
<rect x="399" y="235" width="1" height="224" fill="#d4d4d4"/>
<rect x="463" y="235" width="1" height="224" fill="#d4d4d4"/>
<rect x="527" y="235" width="1" height="224" fill="#d4d4d4"/>
<rect x="591" y="235" width="1" height="224" fill="#d4d4d4"/>
<rect x="655" y="235" width="1" height="224" fill="#d4d4d4"/>
<rect x="719" y="235" width="1" height="224" fill="#d4d4d4"/>
<rect x="783" y="235" width="1" height="224" fill="#d4d4d4"/>
<rect x="847" y="235" width="1" height="224" fill="#d4d4d4"/>
<rect x="911" y="235" width="1" height="224" fill="#d4d4d4"/>
<rect x="975" y="235" width="1" height="224" fill="#d4d4d4"/>
<rect x="1039" y="235" width="1" height="224" fill="#d4d4d4"/>
<rect x="132" y="279" width="140" height="21" fill="#ffff00" />
<rect x="132" y="319" width="140" height="21" fill="#ffff00" />
<rect x="132" y="339" width="140" height="21" fill="#ffc000" />
<rect x="132" y="379" width="140" height="21" fill="#ffc000" />
<text x="11.50" y="253" font-size="12" font-weight="400" fill="#262626" stroke="#262626" stroke-width="0.2" text-anchor="middle" >1</text>
<text x="11.50" y="274" font-size="12" font-weight="400" fill="#262626" stroke="#262626" stroke-width="0.2" text-anchor="middle" >2</text>
<text x="11.50" y="294" font-size="12" font-weight="400" fill="#262626" stroke="#262626" stroke-width="0.2" text-anchor="middle" >3</text>
<text x="11.50" y="314" font-size="12" font-weight="400" fill="#262626" stroke="#262626" stroke-width="0.2" text-anchor="middle" >4</text>
<text x="11.50" y="334" font-size="12" font-weight="400" fill="#262626" stroke="#262626" stroke-width="0.2" text-anchor="middle" >5</text>
<text x="11.50" y="354" font-size="12" font-weight="400" fill="#262626" stroke="#262626" stroke-width="0.2" text-anchor="middle" >6</text>
<text x="11.50" y="374" font-size="12" font-weight="400" fill="#262626" stroke="#262626" stroke-width="0.2" text-anchor="middle" >7</text>
<text x="11.50" y="394" font-size="12" font-weight="400" fill="#262626" stroke="#262626" stroke-width="0.2" text-anchor="middle" >8</text>
<text x="11.50" y="414" font-size="12" font-weight="400" fill="#262626" stroke="#262626" stroke-width="0.2" text-anchor="middle" >9</text>
<text x="11.50" y="434" font-size="12" font-weight="400" fill="#262626" stroke="#262626" stroke-width="0.2" text-anchor="middle" >10</text>
<text x="11.50" y="454" font-size="12" font-weight="400" fill="#262626" stroke="#262626" stroke-width="0.2" text-anchor="middle" >11</text>
<text x="30.50" y="253.5" font-size="16" font-weight="700" fill="#000" stroke="#000" stroke-width="0" letter-spacing="0.233" >Customer ID</text>
<text x="138.70" y="253.5" font-size="16" font-weight="700" fill="#000" stroke="#000" stroke-width="0" letter-spacing="0.350" >Customer Name</text>
<text x="0" y="0" transform="translate(109.60,275) scale(0.9320,1)" font-size="13" font-weight="400" fill="#000" stroke="#000" stroke-width="0.2" >102</text>
<text x="135.20" y="275" font-size="13" font-weight="400" fill="#000" stroke="#000" stroke-width="0.2" letter-spacing="0.122" >Jane Smith</text>
<text x="0" y="0" transform="translate(109.60,295) scale(0.9320,1)" font-size="13" font-weight="400" fill="#000" stroke="#000" stroke-width="0.2" >103</text>
<text x="135.20" y="295" font-size="13" font-weight="400" fill="#000" stroke="#000" stroke-width="0.2" letter-spacing="0.069" >John Doe</text>
<text x="0" y="0" transform="translate(109.60,315) scale(0.9320,1)" font-size="13" font-weight="400" fill="#000" stroke="#000" stroke-width="0.2" >104</text>
<text x="134.20" y="315" font-size="13" font-weight="400" fill="#000" stroke="#000" stroke-width="0.2" letter-spacing="0.499" >Emily Brown</text>
<text x="0" y="0" transform="translate(109.60,335) scale(0.9320,1)" font-size="13" font-weight="400" fill="#000" stroke="#000" stroke-width="0.2" >103</text>
<text x="135.20" y="335" font-size="13" font-weight="400" fill="#000" stroke="#000" stroke-width="0.2" letter-spacing="0.069" >John Doe</text>
<text x="0" y="0" transform="translate(109.60,355) scale(0.9320,1)" font-size="13" font-weight="400" fill="#000" stroke="#000" stroke-width="0.2" >106</text>
<text x="135.20" y="355" font-size="13" font-weight="400" fill="#000" stroke="#000" stroke-width="0.2" letter-spacing="0.474" >Sophia White</text>
<text x="0" y="0" transform="translate(109.60,375) scale(0.9320,1)" font-size="13" font-weight="400" fill="#000" stroke="#000" stroke-width="0.2" >105</text>
<text x="134.20" y="375" font-size="13" font-weight="400" fill="#000" stroke="#000" stroke-width="0.2" letter-spacing="0.211" >David Lee</text>
<text x="0" y="0" transform="translate(109.60,395) scale(0.9320,1)" font-size="13" font-weight="400" fill="#000" stroke="#000" stroke-width="0.2" >106</text>
<text x="135.20" y="395" font-size="13" font-weight="400" fill="#000" stroke="#000" stroke-width="0.2" letter-spacing="0.474" >Sophia White</text>
<defs><filter id="sh" x="-20%" y="-20%" width="140%" height="140%"><feGaussianBlur stdDeviation="2.5"/></filter></defs>
<rect x="688" y="113" width="181" height="274" fill="#000" opacity="0.13" filter="url(#sh)"/>
<rect x="689.5" y="112.5" width="178" height="271" fill="#ffffff" stroke="#a0a0a0" stroke-width="1" />
<rect x="690" y="113" width="178" height="41" fill="#d3d3d3" />
<rect x="867" y="113" width="1" height="41" fill="#a8a8a8"/>
<rect x="697.5" y="122.5" width="27" height="24" fill="#ffffff" stroke="#7a7a7a" stroke-width="1" />
<rect x="704" y="123" width="1" height="23" fill="#a8a8a8"/>
<rect x="718" y="123" width="1" height="23" fill="#a8a8a8"/>
<rect x="698" y="128" width="26" height="1" fill="#a8a8a8"/>
<rect x="698" y="134" width="26" height="1" fill="#a8a8a8"/>
<rect x="698" y="140" width="26" height="1" fill="#a8a8a8"/>
<rect x="704" y="128" width="14" height="7" fill="#ebc57c" />
<rect x="711.5" y="139.5" width="15" height="12" fill="#ffffff" stroke="#7a7a7a" stroke-width="1" />
<path d="M718.5,140.6 L713,143 L718.5,145.4" fill="none" stroke="#333" stroke-width="1.2" />
<path d="M713,147.2 L718.5,147.2 M713,149.5 L718.5,149.5" fill="none" stroke="#333" stroke-width="1.0" />
<path d="M719.6,144.4 L724.6,146.9 L719.6,149.4" fill="none" stroke="#333" stroke-width="1.2" />
<text x="0" y="0" transform="translate(732.30,143) scale(0.9266,1)" font-size="12" font-weight="700" fill="#262626" stroke="#262626" stroke-width="0" >Highlight Cells Rules</text>
<rect x="732.3" y="144" width="8.700000000000045" height="1" fill="#262626"/>
<path d="M854,132 L858.5,136.0 L854,140 Z" fill="#222" />
<rect x="697.5" y="160.5" width="27" height="24" fill="#ffffff" stroke="#7a7a7a" stroke-width="1" />
<rect x="704" y="161" width="1" height="23" fill="#a8a8a8"/>
<rect x="718" y="161" width="1" height="23" fill="#a8a8a8"/>
<rect x="698" y="166" width="26" height="1" fill="#a8a8a8"/>
<rect x="698" y="172" width="26" height="1" fill="#a8a8a8"/>
<rect x="698" y="178" width="26" height="1" fill="#a8a8a8"/>
<rect x="704" y="161" width="14" height="17" fill="#ebc57c" />
<rect x="703" y="161" width="1" height="23" fill="#a8a8a8"/>
<rect x="718" y="161" width="1" height="23" fill="#a8a8a8"/>
<rect x="698" y="166" width="26" height="1" fill="#a8a8a8"/>
<rect x="698" y="172" width="26" height="1" fill="#a8a8a8"/>
<rect x="698" y="178" width="26" height="1" fill="#a8a8a8"/>
<rect x="704" y="161" width="14" height="5" fill="#ebc57c" />
<rect x="704" y="167" width="14" height="5" fill="#ebc57c" />
<rect x="704" y="173" width="14" height="5" fill="#ebc57c" />
<path d="M711,178 L711,164.5 M707,168.5 L711,164.5 L715,168.5" fill="none" stroke="#555" stroke-width="1.4" />
<rect x="710.5" y="177.5" width="16" height="12" fill="#ffffff" stroke="#7a7a7a" stroke-width="1" />
<path d="M716.6,180.3 L716.6,187.7 M714.3,182.2 L716.6,180.3" fill="none" stroke="#333" stroke-width="1.2" />
<ellipse cx="721.6" cy="184" rx="2.5" ry="3.6" fill="none" stroke="#333" stroke-width="1.15"/>
<text x="0" y="0" transform="translate(732.30,181) scale(0.9858,1)" font-size="12" font-weight="700" fill="#262626" stroke="#262626" stroke-width="0" >Top/Bottom Rules</text>
<rect x="732.3" y="182" width="7.7000000000000455" height="1" fill="#262626"/>
<path d="M854,170.5 L858.5,174.5 L854,178.5 Z" fill="#222" />
<rect x="735" y="193" width="132" height="1" fill="#e1e1e1"/>
<rect x="697.5" y="201.5" width="27" height="25" fill="#ffffff" stroke="#7a7a7a" stroke-width="1" />
<rect x="703" y="202" width="1" height="24" fill="#a8a8a8"/>
<rect x="718" y="202" width="1" height="24" fill="#a8a8a8"/>
<rect x="698" y="206" width="26" height="1" fill="#a8a8a8"/>
<rect x="698" y="211" width="26" height="1" fill="#a8a8a8"/>
<rect x="698" y="216" width="26" height="1" fill="#a8a8a8"/>
<rect x="698" y="221" width="26" height="1" fill="#a8a8a8"/>
<rect x="704" y="202" width="9" height="4" fill="#3f7cc4" />
<rect x="714" y="203.5" width="3" height="1" fill="#555"/>
<rect x="704" y="207" width="3" height="4" fill="#3f7cc4" />
<rect x="714" y="208.5" width="3" height="1" fill="#555"/>
<rect x="704" y="212" width="6" height="4" fill="#3f7cc4" />
<rect x="714" y="213.5" width="3" height="1" fill="#555"/>
<rect x="704" y="217" width="8" height="4" fill="#3f7cc4" />
<rect x="714" y="218.5" width="3" height="1" fill="#555"/>
<rect x="704" y="222" width="6" height="4" fill="#3f7cc4" />
<rect x="714" y="223.5" width="3" height="1" fill="#555"/>
<text x="0" y="0" transform="translate(732.30,221) scale(0.9352,1)" font-size="12" font-weight="700" fill="#262626" stroke="#262626" stroke-width="0" >Data Bars</text>
<rect x="732.3" y="222" width="8.700000000000045" height="1" fill="#262626"/>
<path d="M854,210.5 L858.5,214.5 L854,218.5 Z" fill="#222" />
<rect x="697.5" y="239.5" width="27" height="25" fill="#ffffff" stroke="#7a7a7a" stroke-width="1" />
<rect x="703" y="240" width="1" height="24" fill="#a8a8a8"/>
<rect x="718" y="240" width="1" height="24" fill="#a8a8a8"/>
<rect x="698" y="244" width="26" height="1" fill="#a8a8a8"/>
<rect x="698" y="249" width="26" height="1" fill="#a8a8a8"/>
<rect x="698" y="254" width="26" height="1" fill="#a8a8a8"/>
<rect x="698" y="259" width="26" height="1" fill="#a8a8a8"/>
<rect x="704" y="240" width="14" height="4" fill="#4a7fc0" />
<rect x="711" y="241.5" width="6" height="1.3" fill="#444"/>
<rect x="704" y="245" width="14" height="4" fill="#6aa88a" />
<rect x="711" y="246.5" width="6" height="1.3" fill="#444"/>
<rect x="704" y="250" width="14" height="4" fill="#f0cb80" />
<rect x="711" y="251.5" width="6" height="1.3" fill="#444"/>
<rect x="704" y="255" width="14" height="4" fill="#ec9040" />
<rect x="711" y="256.5" width="6" height="1.3" fill="#444"/>
<rect x="704" y="260" width="14" height="4" fill="#dd6038" />
<rect x="711" y="261.5" width="6" height="1.3" fill="#444"/>
<text x="0" y="0" transform="translate(732.30,259) scale(0.9024,1)" font-size="12" font-weight="700" fill="#262626" stroke="#262626" stroke-width="0" >Color Scales</text>
<rect x="763" y="260" width="8" height="1" fill="#262626"/>
<path d="M854,248.5 L858.5,252.5 L854,256.5 Z" fill="#222" />
<rect x="697.5" y="277.5" width="27" height="25" fill="#ffffff" stroke="#7a7a7a" stroke-width="1" />
<rect x="703" y="278" width="1" height="24" fill="#a8a8a8"/>
<rect x="718" y="278" width="1" height="24" fill="#a8a8a8"/>
<rect x="698" y="282" width="26" height="1" fill="#a8a8a8"/>
<rect x="698" y="287" width="26" height="1" fill="#a8a8a8"/>
<rect x="698" y="292" width="26" height="1" fill="#a8a8a8"/>
<rect x="698" y="297" width="26" height="1" fill="#a8a8a8"/>
<circle cx="706.8" cy="280" r="1.6" fill="#4a9a7e"/>
<rect x="711" y="279.5" width="6" height="1.2" fill="#666"/>
<circle cx="706.8" cy="285" r="1.6" fill="#e8701e"/>
<rect x="711" y="284.5" width="6" height="1.2" fill="#666"/>
<circle cx="706.8" cy="290" r="1.6" fill="#4a9a7e"/>
<rect x="711" y="289.5" width="6" height="1.2" fill="#666"/>
<circle cx="706.8" cy="295" r="1.6" fill="#e8701e"/>
<rect x="711" y="294.5" width="6" height="1.2" fill="#666"/>
<circle cx="706.8" cy="300" r="1.6" fill="#4a9a7e"/>
<rect x="711" y="299.5" width="6" height="1.2" fill="#666"/>
<text x="0" y="0" transform="translate(732.30,297) scale(0.9390,1)" font-size="12" font-weight="700" fill="#262626" stroke="#262626" stroke-width="0" >Icon Sets</text>
<rect x="732.3" y="298" width="4.2000000000000455" height="1" fill="#262626"/>
<path d="M854,286.5 L858.5,290.5 L854,294.5 Z" fill="#222" />
<rect x="691" y="309" width="176" height="1" fill="#e1e1e1"/>
<rect x="696.65" y="315.65" width="11.7" height="11.7" fill="#fff" stroke="#666" stroke-width="1.3" />
<rect x="700" y="318" width="5" height="4" fill="#ebc57c" />
<rect x="697" y="318.5" width="1.5" height="1" fill="#aaa"/>
<rect x="706.5" y="318.5" width="1.5" height="1" fill="#aaa"/>
<rect x="697" y="321.5" width="1.5" height="1" fill="#aaa"/>
<rect x="706.5" y="321.5" width="1.5" height="1" fill="#aaa"/>
<rect x="700.5" y="316" width="1" height="1" fill="#aaa"/>
<rect x="700.5" y="323" width="1" height="4" fill="#aaa"/>
<rect x="704.5" y="316" width="1" height="1" fill="#aaa"/>
<rect x="704.5" y="323" width="1" height="4" fill="#aaa"/>
<rect x="697" y="324.3" width="11" height="1" fill="#aaa"/>
<text x="0" y="0" transform="translate(723.60,326) scale(0.9418,1)" font-size="12" font-weight="400" fill="#262626" stroke="#262626" stroke-width="0.2" >New Rule...</text>
<rect x="723.2" y="327" width="8.799999999999955" height="1" fill="#262626"/>
<rect x="696.65" y="339.65" width="11.7" height="11.7" fill="#fff" stroke="#666" stroke-width="1.3" />
<rect x="700" y="342" width="5" height="4" fill="#ebc57c" />
<rect x="697" y="342.5" width="1.5" height="1" fill="#aaa"/>
<rect x="706.5" y="342.5" width="1.5" height="1" fill="#aaa"/>
<rect x="697" y="345.5" width="1.5" height="1" fill="#aaa"/>
<rect x="706.5" y="345.5" width="1.5" height="1" fill="#aaa"/>
<rect x="700.5" y="340" width="1" height="1" fill="#aaa"/>
<rect x="700.5" y="347" width="1" height="4" fill="#aaa"/>
<rect x="704.5" y="340" width="1" height="1" fill="#aaa"/>
<rect x="704.5" y="347" width="1" height="4" fill="#aaa"/>
<rect x="697" y="348.3" width="11" height="1" fill="#aaa"/>
<path d="M707.5,343.5 L711.5,347.5 L705.5,353.5 L701.5,349.5 Z" fill="#f7f7f7" stroke="#ffffff" stroke-width="1.5" />
<path d="M707.5,343.5 L711.5,347.5 L705.5,353.5 L701.5,349.5 Z" fill="#e8808f" />
<text x="0" y="0" transform="translate(723.60,350) scale(0.9092,1)" font-size="12" font-weight="400" fill="#262626" stroke="#262626" stroke-width="0.2" >Clear Rules</text>
<rect x="723.5" y="351" width="8.0" height="1" fill="#262626"/>
<path d="M854,342 L858.5,346.0 L854,350 Z" fill="#222" />
<rect x="697.65" y="364.65" width="11.7" height="11.7" fill="#fff" stroke="#666" stroke-width="1.3" />
<rect x="701" y="367" width="5" height="4" fill="#ebc57c" />
<rect x="698" y="367.5" width="1.5" height="1" fill="#aaa"/>
<rect x="707.5" y="367.5" width="1.5" height="1" fill="#aaa"/>
<rect x="698" y="370.5" width="1.5" height="1" fill="#aaa"/>
<rect x="707.5" y="370.5" width="1.5" height="1" fill="#aaa"/>
<rect x="701.5" y="365" width="1" height="1" fill="#aaa"/>
<rect x="701.5" y="372" width="1" height="4" fill="#aaa"/>
<rect x="705.5" y="365" width="1" height="1" fill="#aaa"/>
<rect x="705.5" y="372" width="1" height="4" fill="#aaa"/>
<rect x="698" y="373.3" width="11" height="1" fill="#aaa"/>
<path d="M695.2,376 L695.2,362.2 L708.5,362.2" fill="none" stroke="#666" stroke-width="1.1" />
<text x="0" y="0" transform="translate(723.60,374) scale(0.9432,1)" font-size="12" font-weight="400" fill="#262626" stroke="#262626" stroke-width="0.2" >Manage Rules...</text>
<rect x="768" y="375" width="8" height="1" fill="#262626"/>
<rect x="867" y="118" width="175" height="296" fill="#000" opacity="0.13" filter="url(#sh)"/>
<rect x="867.5" y="117.5" width="172" height="293" fill="#ffffff" stroke="#a0a0a0" stroke-width="1" />
<rect x="875.5" y="125.5" width="27" height="24" fill="#ffffff" stroke="#7a7a7a" stroke-width="1" />
<rect x="882" y="126" width="1" height="23" fill="#a8a8a8"/>
<rect x="895" y="126" width="1" height="23" fill="#a8a8a8"/>
<rect x="876" y="131" width="26" height="1" fill="#a8a8a8"/>
<rect x="876" y="137" width="26" height="1" fill="#a8a8a8"/>
<rect x="876" y="143" width="26" height="1" fill="#a8a8a8"/>
<rect x="883" y="132" width="12" height="5" fill="#ebc57c" />
<rect x="889.5" y="141.5" width="15" height="12" fill="#ffffff" stroke="#7a7a7a" stroke-width="1" />
<path d="M893.5,144.5 L900,147.5 L893.5,150.5" fill="none" stroke="#333" stroke-width="1.1" />
<text x="0" y="0" transform="translate(910.30,142) scale(0.9280,1)" font-size="12" font-weight="400" fill="#262626" stroke="#262626" stroke-width="0.2" >Greater Than...</text>
<rect x="910.3" y="143" width="8.0" height="1" fill="#262626"/>
<rect x="875.5" y="163.5" width="27" height="24" fill="#ffffff" stroke="#7a7a7a" stroke-width="1" />
<rect x="882" y="164" width="1" height="23" fill="#a8a8a8"/>
<rect x="895" y="164" width="1" height="23" fill="#a8a8a8"/>
<rect x="876" y="169" width="26" height="1" fill="#a8a8a8"/>
<rect x="876" y="175" width="26" height="1" fill="#a8a8a8"/>
<rect x="876" y="181" width="26" height="1" fill="#a8a8a8"/>
<rect x="883" y="170" width="12" height="5" fill="#ebc57c" />
<rect x="889.5" y="179.5" width="15" height="12" fill="#ffffff" stroke="#7a7a7a" stroke-width="1" />
<path d="M900,182.5 L893.5,185.5 L900,188.5" fill="none" stroke="#333" stroke-width="1.1" />
<text x="0" y="0" transform="translate(910.50,180) scale(0.8980,1)" font-size="12" font-weight="400" fill="#262626" stroke="#262626" stroke-width="0.2" >Less Than...</text>
<rect x="910.3" y="181" width="6.5" height="1" fill="#262626"/>
<rect x="875.5" y="201.5" width="27" height="24" fill="#ffffff" stroke="#7a7a7a" stroke-width="1" />
<rect x="882" y="202" width="1" height="23" fill="#a8a8a8"/>
<rect x="895" y="202" width="1" height="23" fill="#a8a8a8"/>
<rect x="876" y="207" width="26" height="1" fill="#a8a8a8"/>
<rect x="876" y="213" width="26" height="1" fill="#a8a8a8"/>
<rect x="876" y="219" width="26" height="1" fill="#a8a8a8"/>
<rect x="876" y="208" width="6" height="4" fill="#3f7cc4" />
<rect x="896" y="208" width="6" height="4" fill="#3f7cc4" />
<rect x="883" y="214" width="12" height="5" fill="#ebc57c" />
<text x="0" y="0" transform="translate(910.50,218) scale(0.9474,1)" font-size="12" font-weight="400" fill="#262626" stroke="#262626" stroke-width="0.2" >Between...</text>
<rect x="910.3" y="219" width="7.5" height="1" fill="#262626"/>
<rect x="875.5" y="239.5" width="27" height="24" fill="#ffffff" stroke="#7a7a7a" stroke-width="1" />
<rect x="882" y="240" width="1" height="23" fill="#a8a8a8"/>
<rect x="895" y="240" width="1" height="23" fill="#a8a8a8"/>
<rect x="876" y="245" width="26" height="1" fill="#a8a8a8"/>
<rect x="876" y="251" width="26" height="1" fill="#a8a8a8"/>
<rect x="876" y="257" width="26" height="1" fill="#a8a8a8"/>
<rect x="883" y="246" width="12" height="5" fill="#ebc57c" />
<rect x="889.5" y="255.5" width="15" height="12" fill="#ffffff" stroke="#7a7a7a" stroke-width="1" />
<rect x="893" y="259" width="8" height="1" fill="#444"/>
<rect x="893" y="262" width="8" height="1" fill="#444"/>
<text x="0" y="0" transform="translate(910.50,256) scale(0.9474,1)" font-size="12" font-weight="400" fill="#262626" stroke="#262626" stroke-width="0.2" >Equal To...</text>
<rect x="910.3" y="257" width="7.5" height="1" fill="#262626"/>
<rect x="875.5" y="277.5" width="27" height="24" fill="#ffffff" stroke="#7a7a7a" stroke-width="1" />
<rect x="882" y="278" width="1" height="23" fill="#a8a8a8"/>
<rect x="895" y="278" width="1" height="23" fill="#a8a8a8"/>
<rect x="876" y="283" width="26" height="1" fill="#a8a8a8"/>
<rect x="876" y="289" width="26" height="1" fill="#a8a8a8"/>
<rect x="876" y="295" width="26" height="1" fill="#a8a8a8"/>
<rect x="883" y="284" width="12" height="5" fill="#ebc57c" />
<rect x="889.5" y="293.5" width="15" height="12" fill="#ffffff" stroke="#7a7a7a" stroke-width="1" />
<text x="891.00" y="304" font-size="11" font-weight="400" fill="#333" stroke="#333" stroke-width="0.2" font-family="Liberation Serif" letter-spacing="1.118" >ab</text>
<text x="0" y="0" transform="translate(910.00,294) scale(0.9885,1)" font-size="12" font-weight="400" fill="#262626" stroke="#262626" stroke-width="0.2" >Text that Contains...</text>
<rect x="910.3" y="295" width="7.5" height="1" fill="#262626"/>
<rect x="875.5" y="315.5" width="27" height="24" fill="#ffffff" stroke="#7a7a7a" stroke-width="1" />
<rect x="881" y="316" width="1" height="23" fill="#a8a8a8"/>
<rect x="896" y="316" width="1" height="23" fill="#a8a8a8"/>
<rect x="876" y="320" width="26" height="1" fill="#a8a8a8"/>
<rect x="876" y="325" width="26" height="1" fill="#a8a8a8"/>
<rect x="876" y="330" width="26" height="1" fill="#a8a8a8"/>
<rect x="876" y="335" width="26" height="1" fill="#a8a8a8"/>
<rect x="882" y="326" width="14" height="5" fill="#ebc57c" />
<rect x="889.5" y="329.5" width="15" height="14" fill="#ffffff" stroke="#777" stroke-width="1" />
<rect x="889" y="329" width="16" height="3" fill="#666" />
<rect x="890" y="335" width="14" height="1" fill="#bbb"/>
<rect x="890" y="338" width="14" height="1" fill="#bbb"/>
<rect x="890" y="341" width="14" height="1" fill="#bbb"/>
<rect x="890" y="344" width="14" height="1" fill="#bbb"/>
<rect x="892" y="332" width="1" height="11" fill="#bbb"/>
<rect x="895" y="332" width="1" height="11" fill="#bbb"/>
<rect x="898" y="332" width="1" height="11" fill="#bbb"/>
<rect x="901" y="332" width="1" height="11" fill="#bbb"/>
<rect x="898.6" y="334.6" width="3.8" height="3.8" fill="#ffffff" stroke="#e0701e" stroke-width="1.2" />
<text x="0" y="0" transform="translate(910.00,332) scale(0.9793,1)" font-size="12" font-weight="400" fill="#262626" stroke="#262626" stroke-width="0.2" >A Date Occurring...</text>
<rect x="910.3" y="333" width="8.0" height="1" fill="#262626"/>
<rect x="875.5" y="353.5" width="27" height="24" fill="#ffffff" stroke="#7a7a7a" stroke-width="1" />
<rect x="882" y="354" width="1" height="23" fill="#a8a8a8"/>
<rect x="895" y="354" width="1" height="23" fill="#a8a8a8"/>
<rect x="876" y="359" width="26" height="1" fill="#a8a8a8"/>
<rect x="876" y="365" width="26" height="1" fill="#a8a8a8"/>
<rect x="876" y="371" width="26" height="1" fill="#a8a8a8"/>
<rect x="883" y="360" width="12" height="5" fill="#ebc57c" />
<rect x="883" y="372" width="12" height="5" fill="#ebc57c" />
<rect x="884" y="356" width="7" height="1" fill="#999"/>
<rect x="884" y="362" width="7" height="1" fill="#999"/>
<rect x="884" y="368" width="7" height="1" fill="#999"/>
<rect x="884" y="374" width="7" height="1" fill="#999"/>
<text x="0" y="0" transform="translate(910.00,370) scale(0.9653,1)" font-size="12" font-weight="400" fill="#262626" stroke="#262626" stroke-width="0.2" >Duplicate Values...</text>
<rect x="910.3" y="371" width="8.5" height="1" fill="#262626"/>
<text x="0" y="0" transform="translate(901.50,402) scale(0.9476,1)" font-size="12" font-weight="400" fill="#262626" stroke="#262626" stroke-width="0.2" >More Rules...</text>
<rect x="901" y="403" width="10.799999999999955" height="1" fill="#262626"/>
<rect x="58" y="11" width="63" height="5" fill="#e8141f" />
<rect x="58" y="42" width="63" height="5" fill="#e8141f" />
<rect x="58" y="11" width="5" height="36" fill="#e8141f" />
<rect x="116" y="11" width="5" height="36" fill="#e8141f" />
<path d="M687.5,43 L764.5,43 L764.5,111 L687.5,111 Z" fill="none" />
<rect x="687" y="43" width="5" height="73" fill="#e8141f" />
<rect x="687" y="43" width="78" height="5" fill="#e8141f" />
<rect x="760" y="43" width="5" height="73" fill="#e8141f" />
<rect x="687" y="111" width="187" height="5" fill="#e8141f" />
<rect x="687" y="155" width="187" height="5" fill="#e8141f" />
<rect x="687" y="111" width="5" height="49" fill="#e8141f" />
<rect x="869" y="111" width="5" height="49" fill="#e8141f" />
<rect x="865" y="346" width="176" height="5" fill="#e8141f" />
<rect x="865" y="384" width="176" height="5" fill="#e8141f" />
<rect x="865" y="346" width="5" height="43" fill="#e8141f" />
<rect x="1036" y="346" width="5" height="43" fill="#e8141f" />
</svg></body></html>
